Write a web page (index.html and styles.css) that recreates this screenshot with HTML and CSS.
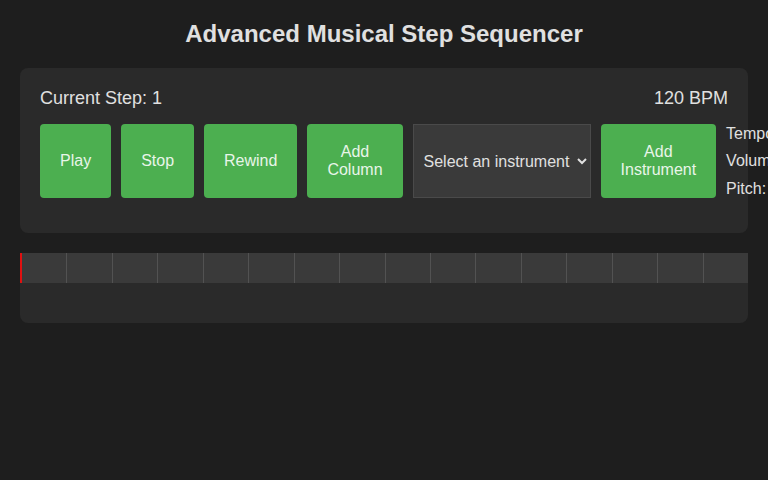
FILE: index.html
```html
<!DOCTYPE html>
<html lang="en">
<head>
    <meta charset="UTF-8">
    <meta name="viewport" content="width=device-width, initial-scale=1.0">
    <title>Advanced Musical Step Sequencer</title>
    <link rel="stylesheet" href="styles.css">
</head>
<body>
    <h1>Advanced Musical Step Sequencer</h1>

    <div class="panel">
        <div class="status-row">
            <span id="current-step">Current Step: 1</span>
            <span id="bpm-display">120 BPM</span>
        </div>

        <div class="controls">
            <button class="btn">Play</button>
            <button class="btn">Stop</button>
            <button class="btn">Rewind</button>
            <button class="btn">Add Column</button>
            <select class="instrument-select">
                <option>Select an instrument</option>
            </select>
            <button class="btn">Add Instrument</button>
            <div class="settings">
                <div class="setting"><label>Tempo:</label><input type="range" min="60" max="200" value="120"></div>
                <div class="setting"><label>Volume:</label><input type="range" min="0" max="100" value="80"></div>
                <div class="setting"><label>Pitch:</label><input type="range" min="-12" max="12" value="0"></div>
            </div>
        </div>
    </div>

    <div class="sequencer">
        <div class="step-row" id="step-row">
            <div class="step current"></div>
            <div class="step"></div>
            <div class="step"></div>
            <div class="step"></div>
            <div class="step"></div>
            <div class="step"></div>
            <div class="step"></div>
            <div class="step"></div>
            <div class="step"></div>
            <div class="step"></div>
            <div class="step"></div>
            <div class="step"></div>
            <div class="step"></div>
            <div class="step"></div>
            <div class="step"></div>
            <div class="step"></div>
        </div>
        <div class="tracks" id="tracks">
            <!-- instrument tracks go here -->
        </div>
    </div>
</body>
</html>
```

FILE: styles.css
```css
/* Dark sequencer theme */
html {
    overflow-x: hidden;
}

body {
    font-family: "Liberation Sans", Arial, sans-serif;
    background-color: #1e1e1e;
    color: #e0e0e0;
    margin: 0;
    padding: 20px;
}

h1 {
    font-size: 24px;
    line-height: 28px;
    text-align: center;
    margin: 0 0 20px 0;
}

.panel {
    background-color: #2a2a2a;
    border-radius: 8px;
    padding: 20px 20px 35px 20px;
    margin-bottom: 20px;
}

.status-row {
    display: flex;
    justify-content: space-between;
    font-size: 18px;
    line-height: 21px;
    margin-bottom: 15px;
}

.controls {
    display: flex;
    gap: 10px;
    height: 74px;
}

.btn {
    background-color: #4caf50;
    color: #e8f5e9;
    border: none;
    border-radius: 4px;
    padding: 0 20px;
    font-family: inherit;
    font-size: 16px;
    line-height: 18px;
    cursor: pointer;
    flex-shrink: 0;
    width: min-content;
}

.instrument-select {
    flex-shrink: 0;
    width: 178px;
    background-color: #3a3a3a;
    color: #e0e0e0;
    border: 1px solid #4a4a4a;
    font-family: inherit;
    font-size: 16px;
    padding: 0 4px 0 6px;
}

.settings {
    display: flex;
    flex-direction: column;
    justify-content: space-between;
    flex-shrink: 0;
}

.setting {
    display: flex;
    align-items: center;
    gap: 8px;
    height: 19px;
    font-size: 16px;
    white-space: nowrap;
}

.setting input {
    width: 100px;
    margin: 0;
}

.sequencer {
    background-color: #2a2a2a;
    border-radius: 0 0 8px 8px;
    overflow: hidden;
}

.step-row {
    display: flex;
    height: 30px;
    background-color: #1e1e1e;
}

.step {
    flex: 1;
    background-color: #3a3a3a;
    border-right: 1px solid #525252;
}

.step:last-child {
    border-right: none;
}

.step.current {
    border-left: 2px solid #e01010;
}

.tracks {
    min-height: 40px;
}
```
